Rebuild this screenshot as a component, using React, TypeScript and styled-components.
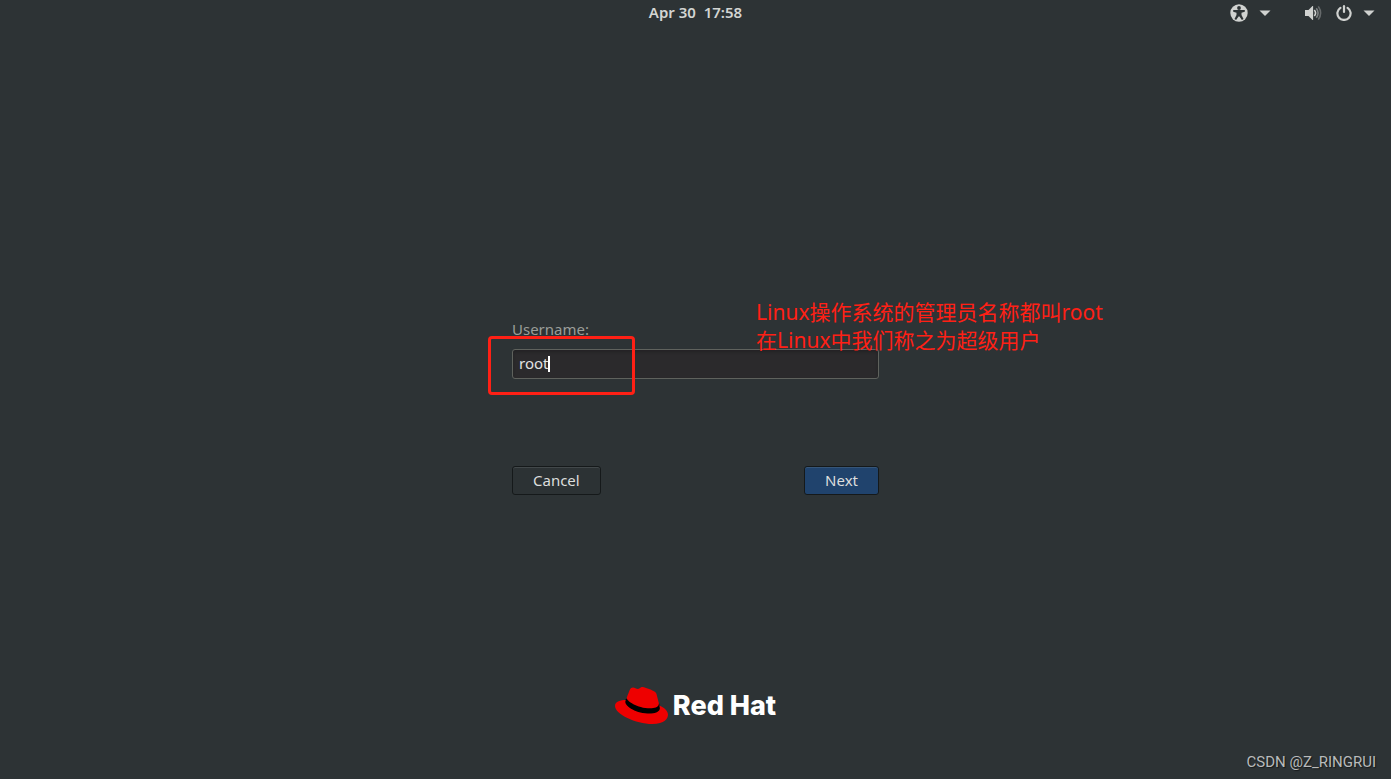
import React, { useState } from "react";
import styled, { createGlobalStyle } from "styled-components";

const GlobalStyle = createGlobalStyle`
  * { box-sizing: border-box; }
  body {
    margin: 0;
    background: #2d3335;
    color: #d3d5d3;
    font-family: "Noto Sans", "Noto Sans CJK SC", sans-serif;
    font-size: 15px;
  }
`;

const Screen = styled.div`
  display: flex;
  flex-direction: column;
  min-height: 100vh;
`;

const TopBar = styled.header`
  display: grid;
  grid-template-columns: 1fr auto 1fr;
  align-items: center;
  height: 26px;
  padding: 0 16px;
`;

const Clock = styled.time`
  grid-column: 2;
  padding-bottom: 2px;
  font-size: 15px;
  font-weight: 600;
  line-height: 20px;
  white-space: pre;
`;

const Indicators = styled.div`
  display: flex;
  justify-content: flex-end;
  gap: 34px;
`;

const Indicator = styled.button`
  display: flex;
  align-items: center;
  gap: 11px;
  height: 26px;
  padding: 0;
  border: 0;
  background: none;
  color: #d0d2d0;
`;

const Main = styled.main`
  flex: 1;
  display: flex;
  flex-direction: column;
  align-items: center;
  justify-content: center;
  padding-top: 102px;
`;

const LoginForm = styled.form`
  position: relative;
  width: 367px;
`;

const Label = styled.label`
  display: block;
  margin-bottom: 11px;
  color: #9b9e99;
  line-height: 18px;
`;

const Field = styled.div`
  position: relative;
  margin-bottom: 87px;
`;

const Entry = styled.input`
  display: block;
  width: 100%;
  height: 30px;
  padding: 0 6px 2px;
  border: 1px solid #5f625d;
  border-radius: 3px;
  outline: none;
  background: #2b2a2c;
  box-shadow: inset 0 2px 3px #232224;
  color: #e2e2e2;
  caret-color: transparent;
  font-family: inherit;
  font-size: 15px;
`;

const Caret = styled.span`
  position: absolute;
  top: 7px;
  left: 36px;
  width: 2px;
  height: 16px;
  background: #ffffff;
`;

const Actions = styled.div`
  display: flex;
  justify-content: space-between;
`;

const Button = styled.button<{ $primary?: boolean }>`
  height: 29px;
  padding: 0 20px 2px;
  border: 1px solid #15191a;
  border-radius: 3px;
  background: ${(p) => (p.$primary ? "#20436d" : "#2c3234")};
  box-shadow: inset 0 1px ${(p) => (p.$primary ? "#365679" : "#42484a")};
  color: #dcdedd;
  font-family: inherit;
  font-size: 15px;
`;

const Highlight = styled.div`
  position: absolute;
  top: 16px;
  left: -24px;
  width: 147px;
  height: 59px;
  border: 3px solid #ff2015;
  border-radius: 4px;
  pointer-events: none;
`;

const Note = styled.p`
  position: absolute;
  top: -22px;
  left: 244px;
  margin: 0;
  color: #ff2015;
  font-size: 21px;
  line-height: 28px;
  white-space: nowrap;
  pointer-events: none;
`;

const Footer = styled.footer`
  position: relative;
  display: flex;
  justify-content: center;
  height: 92px;
`;

const Brand = styled.div`
  display: flex;
  align-items: center;
  gap: 5px;
  height: 37px;
`;

const BrandName = styled.span`
  color: #ffffff;
  font-family: Inter, sans-serif;
  font-size: 27px;
  font-weight: 800;
  line-height: 37px;
`;

const Watermark = styled.small`
  position: absolute;
  right: 15px;
  bottom: 7px;
  color: #b9bbbb;
  font-family: Roboto, sans-serif;
  font-size: 15px;
  line-height: 20px;
  text-shadow: 1px 1px 1px #171a1b;
`;

const Arrow = () => (
  <svg width="12" height="6" viewBox="0 0 12 6" aria-hidden="true">
    <path d="M0.500 0.500h11L6 6z" fill="currentColor" />
  </svg>
);

const AccessIcon = () => (
  <svg width="18" height="18" viewBox="0 0 18 18" aria-hidden="true">
    <circle cx="9" cy="9" r="8.7" fill="currentColor" />
    <circle cx="9" cy="4" r="1.9" fill="#2d3335" />
    <path
      d="M3.2 6h11.6v1.7L11.500 8.800v2.200l2 4-1.600 1L9.500 12.500h-1L6.100 16l-1.600-1L6.500 11V8.800L3.200 7.700z"
      fill="#2d3335"
    />
  </svg>
);

const VolumeIcon = () => (
  <svg width="20" height="16" viewBox="0 0 20 16" aria-hidden="true">
    <path d="M0 5h3.500l4-4h.6v14h-.6l-4-4H0z" fill="currentColor" />
    <g fill="none" stroke="currentColor" strokeWidth="1.600">
      <path d="M9.300 5q2.600 3 0 6" />
      <path d="M11.300 3.200q3.600 4.800 0 9.600" opacity=".5" />
      <path d="M13.300 1.400q4.600 6.600 0 13.200" opacity=".35" />
    </g>
  </svg>
);

const PowerIcon = () => (
  <svg width="16" height="16" viewBox="0 0 16 16" aria-hidden="true">
    <g fill="none" stroke="currentColor" strokeWidth="2.200" strokeLinecap="round">
      <path d="M4.400 2.800a6.600 6.600 0 1 0 7.200 0" />
      <path d="M8 1.200v5.800" />
    </g>
  </svg>
);

const HatIcon = () => (
  <svg width="53" height="37" viewBox="0 2.900 24 18.200" preserveAspectRatio="none" aria-hidden="true">
    <path d="M5 8.600L4.300 10.500C6 15 15 18 20.600 15L20 11L16 12z" fill="#000000" />
    <path
      fill="#ee0000"
      d="M16.009 13.386c1.577 0 3.86-.326 3.86-2.202a1.765 1.765 0 0 0-.04-.431l-.94-4.08c-.216-.898-.406-1.305-1.982-2.093-1.223-.625-3.888-1.658-4.676-1.658-.733 0-.947.946-1.822.946-.842 0-1.467-.706-2.255-.706-.757 0-1.25.515-1.63 1.576 0 0-1.06 2.99-1.197 3.424a.81.81 0 0 0-.028.245c0 1.162 4.577 4.974 10.71 4.974m4.101-1.435c.218 1.032.218 1.14.218 1.277 0 1.765-1.984 2.745-4.593 2.745-5.895.004-11.06-3.451-11.06-5.734a2.326 2.326 0 0 1 .19-.925C2.746 9.415 0 9.794 0 12.217c0 3.969 9.405 8.861 16.851 8.861 5.71 0 7.149-2.582 7.149-4.62 0-1.605-1.387-3.425-3.887-4.512"
    />
  </svg>
);

export default function App() {
  const [username, setUsername] = useState("root");

  return (
    <Screen>
      <GlobalStyle />
      <TopBar>
        <Clock>{"Apr 30  17:58"}</Clock>
        <Indicators>
          <Indicator type="button" aria-label="Accessibility">
            <AccessIcon />
            <Arrow />
          </Indicator>
          <Indicator type="button" aria-label="System">
            <VolumeIcon />
            <PowerIcon />
            <Arrow />
          </Indicator>
        </Indicators>
      </TopBar>
      <Main>
        <LoginForm onSubmit={(e) => e.preventDefault()}>
          <Label htmlFor="username">Username:</Label>
          <Field>
            <Entry
              id="username"
              type="text"
              autoComplete="off"
              spellCheck={false}
              value={username}
              onChange={(e) => setUsername(e.target.value)}
            />
            <Caret />
          </Field>
          <Actions>
            <Button type="button">Cancel</Button>
            <Button type="submit" $primary>
              Next
            </Button>
          </Actions>
          <Highlight />
          <Note>
            Linux操作系统的管理员名称都叫root
            <br />
            在Linux中我们称之为超级用户
          </Note>
        </LoginForm>
      </Main>
      <Footer>
        <Brand>
          <HatIcon />
          <BrandName>Red Hat</BrandName>
        </Brand>
        <Watermark>CSDN @Z_RINGRUI</Watermark>
      </Footer>
    </Screen>
  );
}
